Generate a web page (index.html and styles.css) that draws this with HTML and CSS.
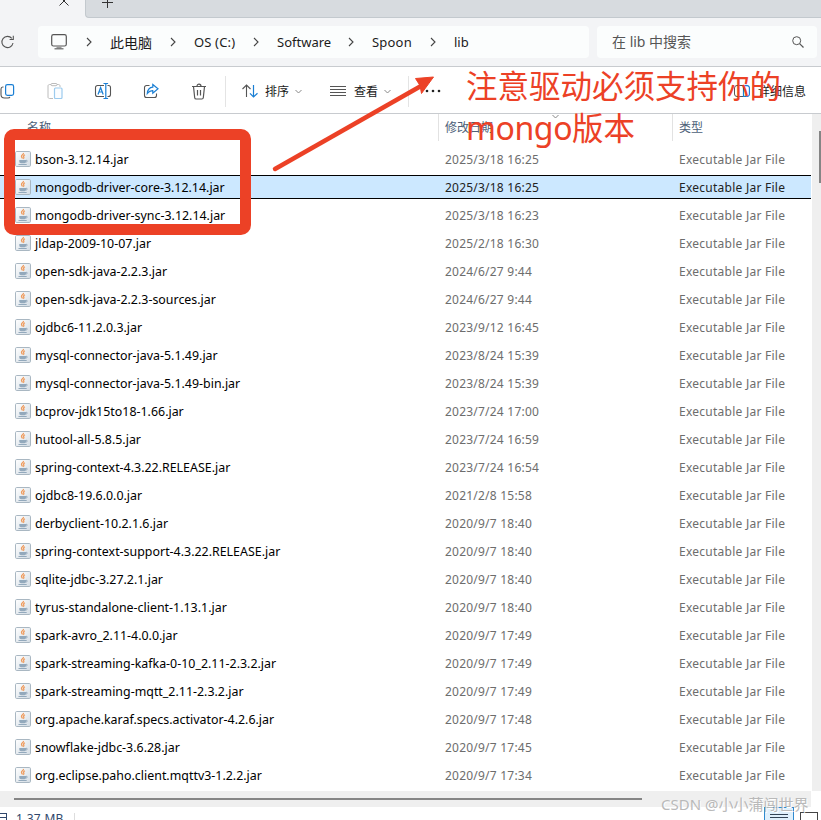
FILE: index.html
```html
<!DOCTYPE html>
<html lang="zh-CN">
<head>
<meta charset="utf-8">
<title>lib</title>
<link rel="stylesheet" href="styles.css">
</head>
<body>
<svg width="0" height="0" class="defs">
  <defs>
    <linearGradient id="jarbg" x1="0" y1="0" x2="1" y2="1"><stop offset="0" stop-color="#ffffff"/><stop offset="1" stop-color="#d3dce4"/></linearGradient>
    <symbol id="jar" viewBox="0 0 16 16">
      <rect x=".5" y=".5" width="15" height="15" rx="1.200" fill="url(#jarbg)" stroke="#a9b7c2"/>
      <path d="M8.400 2c.6 1.500-2.400 2-1.900 3.500.2.800.9 1 .8 2M9.900 3.800C8.400 4.700 8.300 5.500 8.800 6.200c.3.500 0 1-.6 1.400" fill="none" stroke="#ee9a5c" stroke-width="1.300"/>
      <path d="M4.300 9h6.700v1.600c0 1-.7 1.700-1.600 1.700H6c-1 0-1.700-.7-1.700-1.700z" fill="#93a9bc"/>
      <path d="M3.500 13.500h8.200M11 9.400c1.800-.4 1.700 1.400-.2 1.700" fill="none" stroke="#93a9bc" stroke-width="1"/>
    </symbol>
    <symbol id="chev" viewBox="0 0 6 10"><path d="M1 1l4 4-4 4" fill="none" stroke="#444" stroke-width="1.100"/></symbol>
    <symbol id="down" viewBox="0 0 7 5"><path d="M.5 1l3 3 3-3" fill="none" stroke="#888" stroke-width="1"/></symbol>
  </defs>
</svg>
<div class="window">
  <div class="tabs">
    <div class="tab-active"><svg width="10" height="10" viewBox="0 0 10 10"><path d="M.5.500l9 9M9.500.500l-9 9" stroke="#333" fill="none"/></svg></div>
    <div class="tab-rest"><svg width="11" height="11" viewBox="0 0 11 11"><path d="M5.500 0v11M0 5.500h11" stroke="#333" fill="none"/></svg></div>
  </div>
  <div class="nav">
    <div class="refresh"><svg width="14" height="14" viewBox="0 0 14 14"><path d="M13 8A5.600 5.600 0 1 1 11.800 3.400M13.300.8v3.700H9.600" fill="none" stroke="#555" stroke-width="1.100"/></svg></div>
    <div class="address">
      <svg class="pc" width="16" height="16" viewBox="0 0 16 16"><rect x=".7" y=".7" width="14.600" height="11.300" rx="1.800" fill="none" stroke="#555" stroke-width="1.200"/><path d="M5.500 12.500h5v2h-5z" fill="#999"/><path d="M3.500 14.800h9" stroke="#666" stroke-width="1.200"/></svg>
      <svg class="sep s1" width="6" height="10"><use href="#chev"/></svg><span class="crumb c1">此电脑</span>
      <svg class="sep s2" width="6" height="10"><use href="#chev"/></svg><span class="crumb c2">OS (C:)</span>
      <svg class="sep s3" width="6" height="10"><use href="#chev"/></svg><span class="crumb c3">Software</span>
      <svg class="sep s4" width="6" height="10"><use href="#chev"/></svg><span class="crumb c4">Spoon</span>
      <svg class="sep s5" width="6" height="10"><use href="#chev"/></svg><span class="crumb">lib</span>
    </div>
    <div class="search"><span>在 lib 中搜索</span><svg width="12" height="12" viewBox="0 0 12 12"><circle cx="4.700" cy="4.700" r="4" fill="none" stroke="#555"/><path d="M7.600 7.600L11.500 11.500" stroke="#555" stroke-width="1.200"/></svg></div>
  </div>
  <div class="commands">
    <div class="tools">
      <svg width="16" height="16" viewBox="0 0 16 16"><rect x="6.600" y="1.600" width="8" height="10.800" rx="1.800" fill="#fbfdff" stroke="#1a7fd4" stroke-width="1.200"/><path d="M4.500 4H3.800C2.500 4 2 5 2 6v5.500C2 13.500 3.500 15 5.500 15h3.500c1 0 1.700-.5 1.900-1.200" fill="none" stroke="#555" stroke-width="1.100"/></svg>
      <svg width="16" height="16" viewBox="0 0 16 16"><path d="M6 15.500H2.500c-.8 0-1.500-.6-1.500-1.500V3c0-.9.700-1.500 1.500-1.500H4M10 1.500h1.500c.9 0 1.500.6 1.500 1.500v1" fill="none" stroke="#bcbcbc"/><rect x="4" y=".5" width="6" height="2.200" rx="1" fill="none" stroke="#bcbcbc"/><rect x="7.500" y="5" width="7.500" height="10.500" rx="1" fill="#fbfdff" stroke="#9ccbee" stroke-width="1.200"/></svg>
      <svg width="18" height="16" viewBox="0 0 18 16"><path d="M10 2.500H3.500a2 2 0 0 0-2 2v7a2 2 0 0 0 2 2H10M13.500 2.500h1a2 2 0 0 1 2 2v7a2 2 0 0 1-2 2h-1" fill="none" stroke="#555" stroke-width="1.100"/><path d="M11.800.5v15M9.500.500h4.600M9.500 15.500h4.600M4 11.500L6.600 4.500 9.200 11.500M5 9h3.300" fill="none" stroke="#1a7fd4" stroke-width="1.200"/></svg>
      <svg width="16" height="16" viewBox="0 0 16 16"><path d="M6.500 2.500H3.500a2 2 0 0 0-2 2v8a2 2 0 0 0 2 2h8a2 2 0 0 0 2-2v-2" fill="none" stroke="#555" stroke-width="1.100"/><path d="M9.800 1.500L15 5.800 9.800 10.300V7.700C7.500 7.600 5.800 8.500 4.300 10.500 4.600 6.800 6.500 4.500 9.800 4.200z" fill="none" stroke="#1a7fd4" stroke-width="1.200"/></svg>
      <svg width="16" height="17" viewBox="0 0 16 17"><path d="M1 3.500h14M6 3.300C6 .3 10 .3 10 3.300M2.500 3.500l1.200 11.200c.1.800.6 1.300 1.400 1.300h5.800c.8 0 1.300-.5 1.400-1.300L13.500 3.500M6.500 7v5.500M9.500 7v5.500" fill="none" stroke="#555" stroke-width="1.200"/></svg>
    </div>
    <i class="divider"></i>
    <div class="sort"><svg width="16" height="14" viewBox="0 0 16 14"><path d="M4.500 13V1M.5 5l4-4 4 4" fill="none" stroke="#555" stroke-width="1.100"/><path d="M11.500 1v12M8 9.300l3.500 3.700 4-3.700" fill="none" stroke="#1a7fd4" stroke-width="1.200"/></svg><span>排序</span><svg width="7" height="5"><use href="#down"/></svg></div>
    <div class="view"><svg width="16" height="11" viewBox="0 0 16 11"><path d="M0 .5h16M0 3.500h16M0 6.500h16M0 9.500h16" stroke="#555"/></svg><span>查看</span><svg width="7" height="5"><use href="#down"/></svg></div>
    <i class="divider two"></i>
    <svg class="more" width="16" height="4"><circle cx="2" cy="2" r="1.300"/><circle cx="8" cy="2" r="1.300"/><circle cx="14" cy="2" r="1.300"/></svg>
    <div class="details"><svg width="16" height="12" viewBox="0 0 16 12"><path d="M9 .5H3a2.500 2.500 0 0 0-2.500 2.500v6A2.500 2.500 0 0 0 3 11.500h6" fill="none" stroke="#555"/><path d="M9.500.600H13A2.300 2.300 0 0 1 15.400 3v6A2.300 2.300 0 0 1 13 11.400H9.500z" fill="none" stroke="#1a7fd4" stroke-width="1.200"/></svg><span>详细信息</span></div>
  </div>
  <div class="content">
    <div class="list">
      <div class="head"><span class="name">名称</span><span class="date">修改日期<svg class="sorted" width="7" height="5"><use href="#down"/></svg></span><span class="type">类型</span></div>
      <div class="row"><svg><use href="#jar"/></svg><b>bson-3.12.14.jar</b><span>2025/3/18 16:25</span><em>Executable Jar File</em></div>
      <div class="row selected"><svg><use href="#jar"/></svg><b>mongodb-driver-core-3.12.14.jar</b><span>2025/3/18 16:25</span><em>Executable Jar File</em></div>
      <div class="row"><svg><use href="#jar"/></svg><b>mongodb-driver-sync-3.12.14.jar</b><span>2025/3/18 16:23</span><em>Executable Jar File</em></div>
      <div class="row"><svg><use href="#jar"/></svg><b>jldap-2009-10-07.jar</b><span>2025/2/18 16:30</span><em>Executable Jar File</em></div>
      <div class="row"><svg><use href="#jar"/></svg><b>open-sdk-java-2.2.3.jar</b><span>2024/6/27 9:44</span><em>Executable Jar File</em></div>
      <div class="row"><svg><use href="#jar"/></svg><b>open-sdk-java-2.2.3-sources.jar</b><span>2024/6/27 9:44</span><em>Executable Jar File</em></div>
      <div class="row"><svg><use href="#jar"/></svg><b>ojdbc6-11.2.0.3.jar</b><span>2023/9/12 16:45</span><em>Executable Jar File</em></div>
      <div class="row"><svg><use href="#jar"/></svg><b>mysql-connector-java-5.1.49.jar</b><span>2023/8/24 15:39</span><em>Executable Jar File</em></div>
      <div class="row"><svg><use href="#jar"/></svg><b>mysql-connector-java-5.1.49-bin.jar</b><span>2023/8/24 15:39</span><em>Executable Jar File</em></div>
      <div class="row"><svg><use href="#jar"/></svg><b>bcprov-jdk15to18-1.66.jar</b><span>2023/7/24 17:00</span><em>Executable Jar File</em></div>
      <div class="row"><svg><use href="#jar"/></svg><b>hutool-all-5.8.5.jar</b><span>2023/7/24 16:59</span><em>Executable Jar File</em></div>
      <div class="row"><svg><use href="#jar"/></svg><b>spring-context-4.3.22.RELEASE.jar</b><span>2023/7/24 16:54</span><em>Executable Jar File</em></div>
      <div class="row"><svg><use href="#jar"/></svg><b>ojdbc8-19.6.0.0.jar</b><span>2021/2/8 15:58</span><em>Executable Jar File</em></div>
      <div class="row"><svg><use href="#jar"/></svg><b>derbyclient-10.2.1.6.jar</b><span>2020/9/7 18:40</span><em>Executable Jar File</em></div>
      <div class="row"><svg><use href="#jar"/></svg><b>spring-context-support-4.3.22.RELEASE.jar</b><span>2020/9/7 18:40</span><em>Executable Jar File</em></div>
      <div class="row"><svg><use href="#jar"/></svg><b>sqlite-jdbc-3.27.2.1.jar</b><span>2020/9/7 18:40</span><em>Executable Jar File</em></div>
      <div class="row"><svg><use href="#jar"/></svg><b>tyrus-standalone-client-1.13.1.jar</b><span>2020/9/7 18:40</span><em>Executable Jar File</em></div>
      <div class="row"><svg><use href="#jar"/></svg><b>spark-avro_2.11-4.0.0.jar</b><span>2020/9/7 17:49</span><em>Executable Jar File</em></div>
      <div class="row"><svg><use href="#jar"/></svg><b>spark-streaming-kafka-0-10_2.11-2.3.2.jar</b><span>2020/9/7 17:49</span><em>Executable Jar File</em></div>
      <div class="row"><svg><use href="#jar"/></svg><b>spark-streaming-mqtt_2.11-2.3.2.jar</b><span>2020/9/7 17:49</span><em>Executable Jar File</em></div>
      <div class="row"><svg><use href="#jar"/></svg><b>org.apache.karaf.specs.activator-4.2.6.jar</b><span>2020/9/7 17:48</span><em>Executable Jar File</em></div>
      <div class="row"><svg><use href="#jar"/></svg><b>snowflake-jdbc-3.6.28.jar</b><span>2020/9/7 17:45</span><em>Executable Jar File</em></div>
      <div class="row"><svg><use href="#jar"/></svg><b>org.eclipse.paho.client.mqttv3-1.2.2.jar</b><span>2020/9/7 17:34</span><em>Executable Jar File</em></div>
    </div>
    <div class="vscroll"><i></i></div>
  </div>
  <div class="hscroll"><i></i></div>
  <div class="status">
    <i class="clip"></i><span>1.37 MB</span><i class="bar"></i>
    <div class="modes"><i class="mode on"><u></u><u></u></i><i class="mode"></i></div>
  </div>
  <div class="mark-box"></div>
  <svg class="arrow" width="170" height="104" viewBox="0 0 170 104"><path d="M5 99L151 16" stroke="#ec4126" stroke-width="4.500" stroke-linecap="round"/><path d="M163.500 7L145.500 8.500l4.500 7 1.500 8z" fill="#ec4126" stroke="#ec4126"/></svg>
  <div class="note"><div class="n1">注意驱动必须支持你的</div><div class="n2"><span>mongo</span>版本</div></div>
  <div class="watermark">CSDN @小小蒲闯世界</div>
</div>
</body>
</html>
```
FILE: styles.css
```css
* { box-sizing: border-box; }
body { margin: 0; background: #fff; overflow: hidden; }
svg { display: block; flex: none; }
.defs { position: absolute; }
.window {
  position: relative; width: 821px; height: 820px; overflow: hidden;
  display: flex; flex-direction: column;
  font-family: "Noto Sans", "Noto Sans CJK SC", sans-serif; font-size: 12px; color: #1b1b1b;
}
.tabs { display: flex; height: 18px; background: #f3f4f6; flex: none; }
.tab-active { width: 85px; padding: 0 0 0 59px; }
.tab-active svg { margin-top: -4px; }
.tab-rest { flex: 1; background: #d7dbdf; border: 1px solid #c3c9ce; border-width: 0 0 1px 1px; border-bottom-left-radius: 4px; padding-left: 16px; }
.tab-rest svg { margin-top: -3px; }
.nav { display: flex; height: 49px; background: #f3f4f6; border-bottom: 1px solid #c8cbcf; padding: 8px 4px 8px 0; flex: none; }
.refresh { width: 38px; padding-top: 9px; }
.address, .search { display: flex; align-items: center; height: 32px; background: #fbfdfd; border-radius: 4px; font-size: 13px; white-space: nowrap; }
.address { width: 551px; padding-left: 13px; }
.pc { margin-top: -1px; }
.crumb { margin-left: 18px; }
.c1 { width: 43px; font-size: 14px; }
.c2 { width: 42px; letter-spacing: .15px; }
.c3 { width: 54px; }
.c4 { width: 41px; letter-spacing: .2px; }
.sep { margin-left: 17px; }
.address .s1 { margin-left: 19px; }
.search { width: 220px; margin-left: 8px; padding: 0 13px 0 15px; justify-content: space-between; color: #555; font-size: 14px; }
.search span { margin-top: -2px; }
.commands { display: flex; align-items: center; height: 47px; border-bottom: 1px solid #c8cbcf; background: #fff; flex: none; padding-top: 2px; }
.tools { display: flex; align-items: center; width: 225px; gap: 32px; }
.tools svg:first-child { margin-left: -1px; }
.tools svg:nth-child(3) { margin: 0 -1px; }
.divider { width: 1px; height: 31px; background: #e4e4e4; }
.sort, .view { display: flex; align-items: center; }
.sort { margin-left: 16px; }
.sort span { width: 24px; margin: 0 6px 0 7px; }
.view span { width: 24px; margin: 0 6px 0 8px; }
.view { margin-left: 28px; }
.two { margin-left: 17px; }
.more { margin-left: 16px; fill: #222; }
.details { display: flex; margin-left: auto; margin-right: 15px; align-items: center; gap: 8px; }
.content { display: flex; height: 677px; flex: none; }
.list { width: 812px; padding-right: 1px; }
.head, .row { display: grid; align-items: center; white-space: nowrap; }
.head { grid-template-columns: 438px 234px 1fr; height: 31px; color: #4c6078; align-items: start; }
.head span { height: 27px; line-height: 27px; }
.head .name { padding-left: 27px; }
.head .date, .head .type { border-left: 1px solid #e2e2e2; padding-left: 6px; }
.head .date { position: relative; }
.sorted { position: absolute; left: 113px; top: 0; }
.row { grid-template-columns: 20px 410px 234px 1fr; height: 24px; margin: 2px 0 4px; padding-left: 15px; color: #6d6d6d; }
.row svg { width: 16px; height: 16px; }
.row b { font-weight: 400; color: #000; font-size: 12.4px; letter-spacing: .01px; }
.row span { letter-spacing: .22px; }
.row em { font-style: normal; letter-spacing: .25px; }
.row.selected { background: #cce8ff; box-shadow: inset 0 1px #000, inset 0 -1px #000; color: #222; }
.vscroll { width: 9px; background: #efefef; padding: 17px 0 0 7px; }
.vscroll i { display: block; height: 52px; background: #858585; }
.hscroll { width: 811px; height: 16px; background: #efefef; padding: 7px 0 0 14px; flex: none; }
.hscroll i { display: block; width: 628px; height: 2px; background: #858585; }
.status { display: flex; align-items: flex-start; height: 13px; overflow: hidden; color: #30476c; }
.clip { width: 7px; height: 12px; margin-top: 6px; border: 1px solid #30476c; border-left: 0; }
.clip::before { content: ""; display: block; height: 1px; background: #30476c; margin-top: 3px; }
.status span { width: 57px; margin-left: 9px; line-height: 23px; white-space: nowrap; letter-spacing: .3px; }
.bar { width: 1px; height: 12px; margin-top: 6px; background: #ddd; margin-left: 1px; }
.modes { display: flex; align-items: flex-start; margin-left: auto; gap: 6px; margin-right: 3px; }
.mode { width: 18px; height: 16px; border: 1px solid #444; margin-top: 5px; }
.mode.on { width: 30px; margin-top: 0; background: #dff0fc; border-color: #2f8ad0; padding: 6px 5px; }
.mode u { display: block; height: 1px; background: #345; margin-bottom: 2px; }
.mark-box { position: absolute; left: 4px; top: 129px; width: 247px; height: 106px; border: 11px solid #ec4126; border-radius: 10px; }
.arrow { position: absolute; left: 270px; top: 70px; }
.note { position: absolute; left: 466px; top: 63px; font-family: "Noto Sans CJK SC", sans-serif; font-weight: 400; font-size: 31.5px; line-height: 42px; color: #ec4126; white-space: nowrap; }
.n2 span { font-family: "Noto Sans", sans-serif; font-size: 32px; letter-spacing: -.4px; }
.watermark { position: absolute; left: 661px; top: 794px; font-size: 15px; line-height: 20px; color: #b9b9b9; text-shadow: 1px 1px #fff; white-space: nowrap; }
```
